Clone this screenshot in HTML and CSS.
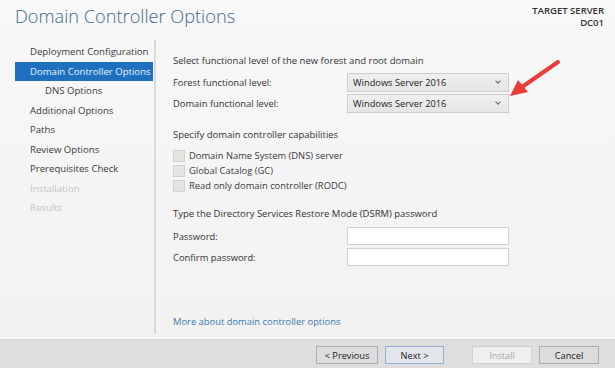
FILE: index.html
```html
<!DOCTYPE html>
<html lang="en">
<head>
    <meta charset="UTF-8">
    <title>Domain Controller Options</title>
    <link rel="stylesheet" href="styles.css">
</head>
<body>
    <div class="wizard">
        <!-- Cabeçalho -->
        <div class="header">
            <h1 class="title">Domain Controller Options</h1>
            <div class="target">
                <div>TARGET SERVER</div>
                <div>DC01</div>
            </div>
        </div>

        <div class="main">
            <!-- Passos do assistente -->
            <ul class="steps">
                <li>Deployment Configuration</li>
                <li class="active">Domain Controller Options</li>
                <li class="sub">DNS Options</li>
                <li>Additional Options</li>
                <li>Paths</li>
                <li>Review Options</li>
                <li>Prerequisites Check</li>
                <li class="disabled">Installation</li>
                <li class="disabled">Results</li>
            </ul>

            <!-- Conteúdo -->
            <div class="content">
                <p class="section-title first">Select functional level of the new forest and root domain</p>
                <div class="field-row first-row">
                    <span class="label">Forest functional level:</span>
                    <div class="select">Windows Server 2016<span class="chevron"></span></div>
                </div>
                <div class="field-row">
                    <span class="label">Domain functional level:</span>
                    <div class="select">Windows Server 2016<span class="chevron"></span></div>
                </div>

                <p class="section-title second">Specify domain controller capabilities</p>
                <div class="checks">
                    <label class="check"><span class="box"></span>Domain Name System (DNS) server</label>
                    <label class="check"><span class="box"></span>Global Catalog (GC)</label>
                    <label class="check"><span class="box"></span>Read only domain controller (RODC)</label>
                </div>

                <p class="section-title third">Type the Directory Services Restore Mode (DSRM) password</p>
                <div class="field-row pw-row first-pw">
                    <span class="label">Password:</span>
                    <div class="text-input"></div>
                </div>
                <div class="field-row pw-row">
                    <span class="label">Confirm password:</span>
                    <div class="text-input"></div>
                </div>

                <a class="more-link" href="#">More about domain controller options</a>
            </div>
        </div>

        <!-- Rodapé -->
        <div class="footer">
            <button class="btn btn-prev">&lt; Previous</button>
            <button class="btn btn-next">Next &gt;</button>
            <button class="btn btn-install" disabled>Install</button>
            <button class="btn">Cancel</button>
        </div>

        <!-- Seta vermelha -->
        <svg class="arrow" width="60" height="45" viewBox="0 0 60 45">
            <line x1="53" y1="6" x2="17" y2="31" stroke="#ec3b3b" stroke-width="4" stroke-linecap="round"/>
            <polygon points="5,40 13,24 23,36" fill="#ec3b3b"/>
        </svg>
    </div>
</body>
</html>
```

FILE: styles.css
```css
body {
    margin: 0;
    font-family: "Open Sans", "Noto Sans", Arial, sans-serif;
    background-color: #f6f6f6;
}
.wizard {
    position: relative;
    width: 615px;
    height: 368px;
    display: flex;
    flex-direction: column;
    overflow: hidden;
    background: linear-gradient(#f8f8f8, #f1f1f1);
}
.header {
    height: 40px;
    flex-shrink: 0;
    display: flex;
    justify-content: space-between;
    padding: 0 11px 0 15px;
}
.title {
    margin: 4px 0 0 0;
    font-size: 18.2px;
    line-height: 24px;
    font-weight: 300;
    color: #3d6a8b;
}
.target {
    margin-top: 5px;
    text-align: right;
    font-size: 9.5px;
    font-weight: 600;
    line-height: 12px;
    color: #333;
}
.main {
    flex: 1;
    display: flex;
}
.steps {
    list-style: none;
    margin: 0 0 4px 15px;
    padding: 2px 0 0 0;
    width: 139px;
    border-right: 2px solid #dadada;
}
.steps li {
    height: 19.5px;
    line-height: 19.5px;
    padding-left: 15px;
    font-size: 9.6px;
    color: #3a3a3a;
    white-space: nowrap;
}
.steps li.active {
    background-color: #1f71c0;
    color: #e6f1ff;
    margin-right: 1px;
}
.steps li.sub {
    padding-left: 30px;
}
.steps li.disabled {
    color: #c4c4c4;
}
.content {
    flex: 1;
    display: flex;
    flex-direction: column;
    padding: 0 0 8px 17px;
    font-size: 9.4px;
    color: #333;
}
.section-title {
    margin: 0;
    line-height: 16px;
    font-size: 9.5px;
}
.section-title.first {
    margin-top: 13px;
}
.section-title.second {
    margin-top: 14px;
}
.section-title.third {
    margin-top: 13px;
}
.field-row {
    display: flex;
    align-items: center;
    height: 19px;
    margin-top: 2px;
}
.field-row.first-row {
    margin-top: 4px;
}
.label {
    width: 174px;
}
.select {
    position: relative;
    width: 155px;
    height: 17px;
    line-height: 17px;
    padding-left: 5px;
    background: linear-gradient(#efefef, #e5e5e5);
    border: 1px solid #cdcdcd;
    font-size: 9.3px;
    color: #222;
}
.chevron {
    position: absolute;
    right: 8px;
    top: 5px;
    width: 3px;
    height: 3px;
    border-right: 1px solid #666;
    border-bottom: 1px solid #666;
    transform: rotate(45deg);
}
.checks {
    margin-top: 5px;
}
.check {
    display: flex;
    align-items: center;
    height: 15px;
    color: #3a3a3a;
}
.box {
    width: 10px;
    height: 10px;
    margin-right: 4px;
    background-color: #e4e4e4;
    border: 1px solid #d2d2d2;
}
.pw-row {
    height: 18px;
    margin-top: 3px;
}
.pw-row.first-pw {
    margin-top: 5px;
}
.text-input {
    width: 160px;
    height: 16px;
    background-color: #fff;
    border: 1px solid #c9d3dd;
}
.more-link {
    margin-top: auto;
    line-height: 16px;
    color: #3c7bb3;
    text-decoration: none;
}
.footer {
    box-sizing: border-box;
    height: 30px;
    flex-shrink: 0;
    border-top: 1px solid #fafafa;
    box-shadow: inset 0 1px 0 #d4d4d4;
    background-color: #dedede;
    display: flex;
    justify-content: flex-end;
    align-items: flex-start;
    padding: 7px 16px 0 0;
}
.btn {
    height: 18px;
    width: 60px;
    margin-left: 7px;
    padding: 0;
    font-family: inherit;
    font-size: 9.2px;
    color: #222;
    background-color: #dcdcdc;
    border: 1px solid #adadad;
}
.btn-prev {
    width: 62px;
}
.btn-next {
    width: 59px;
    border-color: #8fb3d6;
    background-color: #e2e6ea;
}
.btn-install {
    margin-left: 28px;
    color: #a8a8a8;
    background-color: #efefef;
    border-color: #cfcfcf;
}
.arrow {
    position: absolute;
    left: 505px;
    top: 56px;
}
```
